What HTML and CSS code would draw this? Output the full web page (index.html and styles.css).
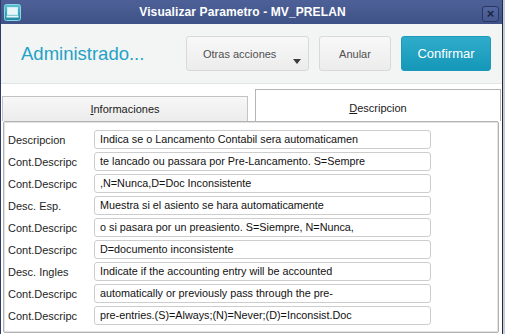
FILE: index.html
```html
<!DOCTYPE html>
<html>
<head>
<meta charset="utf-8">
<link rel="stylesheet" href="styles.css">
</head>
<body>
<div class="window">
  <div class="titlebar">
    <span class="app-icon">
      <svg width="17" height="17" viewBox="0 0 17 17">
        <defs>
          <linearGradient id="ig" x1="0" y1="0" x2="0" y2="1">
            <stop offset="0" stop-color="#5cc3d6"/>
            <stop offset="1" stop-color="#1a8aa6"/>
          </linearGradient>
        </defs>
        <rect x="0.5" y="0.5" width="16" height="16" rx="2" fill="url(#ig)" stroke="#8fd3e0"/>
        <rect x="3.5" y="3.5" width="10" height="7" fill="#e8f6f9" stroke="#cfeef4" stroke-width="1"/>
        <rect x="2.5" y="11.5" width="12" height="2" fill="#e8f6f9"/>
      </svg>
    </span>
    <span class="title">Visualizar Parametro - MV_PRELAN</span>
    <span class="close">&#215;</span>
  </div>
  <div class="header">
    <span class="app-name">Administrado...</span>
    <div class="actions">
      <button class="btn btn-more">Otras acciones<span class="caret"></span></button>
      <button class="btn btn-cancel">Anular</button>
      <button class="btn btn-primary">Confirmar</button>
    </div>
  </div>
  <div class="tabs">
    <div class="tab"><u>I</u>nformaciones</div>
    <div class="tab active"><u>D</u>escripcion</div>
  </div>
  <div class="panel">
    <div class="row"><span class="label">Descripcion</span><span class="field">Indica se o Lancamento Contabil sera automaticamen</span></div>
    <div class="row"><span class="label">Cont.Descripc</span><span class="field">te lancado ou passara por Pre-Lancamento. S=Sempre</span></div>
    <div class="row"><span class="label">Cont.Descripc</span><span class="field">,N=Nunca,D=Doc Inconsistente</span></div>
    <div class="row"><span class="label">Desc. Esp.</span><span class="field">Muestra si el asiento se hara automaticamente</span></div>
    <div class="row"><span class="label">Cont.Descripc</span><span class="field">o si pasara por un preasiento. S=Siempre, N=Nunca,</span></div>
    <div class="row"><span class="label">Cont.Descripc</span><span class="field">D=documento inconsistente</span></div>
    <div class="row"><span class="label">Desc. Ingles</span><span class="field">Indicate if the accounting entry will be accounted</span></div>
    <div class="row"><span class="label">Cont.Descripc</span><span class="field">automatically or previously pass through the pre-</span></div>
    <div class="row"><span class="label">Cont.Descripc</span><span class="field">pre-entries.(S)=Always;(N)=Never;(D)=Inconsist.Doc</span></div>
  </div>
</div>
</body>
</html>
```
FILE: styles.css
```css
html, body {
  margin: 0;
  padding: 0;
}
body {
  background: #c9ccd2;
  width: 505px;
  height: 334px;
  overflow: hidden;
  font-family: "Liberation Sans", Arial, sans-serif;
}
.window {
  width: 501px;
  height: 334px;
  background: #ffffff;
  border-left: 1px solid #2c3d6c;
  border-right: 1px solid #1e2a4c;
  display: flex;
  flex-direction: column;
}
.titlebar {
  height: 24px;
  flex: none;
  background: linear-gradient(#4d6198, #3f5287);
  display: flex;
  align-items: center;
}
.app-icon {
  margin-left: 3px;
  width: 17px;
  height: 17px;
  display: flex;
}
.title {
  flex: 1;
  text-align: center;
  color: #ffffff;
  font-weight: bold;
  font-size: 12px;
  margin-right: 18px;
  letter-spacing: 0.1px;
}
.close {
  width: 15px;
  height: 14px;
  margin-right: 3px;
  margin-top: 4px;
  border: 1px solid #2a3760;
  border-radius: 3px;
  background: linear-gradient(#5366a0, #46588e);
  color: #1c2440;
  font-size: 13px;
  font-weight: bold;
  line-height: 13px;
  text-align: center;
}
.header {
  height: 59px;
  flex: none;
  background: #f3f4f4;
  border-bottom: 1px solid #e2e3e3;
  display: flex;
  align-items: center;
  justify-content: space-between;
}
.app-name {
  margin-left: 20px;
  color: #23a2c6;
  font-size: 18.5px;
}
.actions {
  display: flex;
  gap: 10px;
  margin-right: 11px;
}
.btn {
  height: 35px;
  border: 1px solid #d9d9d9;
  border-radius: 3px;
  background: linear-gradient(#f8f8f8, #ececec);
  font-family: "Liberation Sans", Arial, sans-serif;
  font-size: 11px;
  color: #505050;
  padding: 0;
  position: relative;
}
.btn-more {
  width: 123px;
  text-align: left;
  padding-left: 16px;
}
.caret {
  position: absolute;
  right: 7px;
  top: 22px;
  width: 0;
  height: 0;
  border-left: 4px solid transparent;
  border-right: 4px solid transparent;
  border-top: 5px solid #3c3c3c;
}
.btn-cancel {
  width: 72px;
}
.btn-primary {
  width: 90px;
  border-color: #1d9ab9;
  background: linear-gradient(#30acca, #1597b9);
  color: #ffffff;
  font-size: 13px;
}
.tabs {
  height: 37px;
  flex: none;
  display: flex;
  align-items: flex-end;
  padding-left: 1px;
  gap: 7px;
}
.tab {
  width: 246px;
  height: 25px;
  box-sizing: border-box;
  border: 1px solid #c3c3c3;
  border-bottom: none;
  background: linear-gradient(#f7f7f7, #ececec);
  font-size: 11px;
  color: #1a1a1a;
  text-align: center;
  line-height: 25px;
}
.tab.active {
  height: 32px;
  width: 246px;
  background: #ffffff;
  border-color: #b5b5b5;
  line-height: 37px;
}
.tab u {
  text-decoration: underline;
  text-underline-offset: 1px;
}
.panel {
  flex: 1;
  margin: 0 0 1px 2px;
  width: 496px;
  box-sizing: border-box;
  border: 1px solid #b2b2b2;
  border-radius: 2px;
  box-shadow: inset 0 0 0 1px #e2e2e2;
  padding: 8px 0 0 4px;
  display: flex;
  flex-direction: column;
  gap: 3px;
}
.row {
  display: flex;
  align-items: center;
  height: 19px;
}
.label {
  width: 86px;
  flex: none;
  font-size: 11px;
  color: #1e1e1e;
}
.field {
  width: 337px;
  height: 19px;
  box-sizing: border-box;
  border: 1px solid #cdcdcd;
  border-radius: 3px;
  background: #ffffff;
  font-size: 10.8px;
  color: #111111;
  line-height: 17px;
  padding-left: 5px;
  white-space: nowrap;
  overflow: hidden;
}
```
